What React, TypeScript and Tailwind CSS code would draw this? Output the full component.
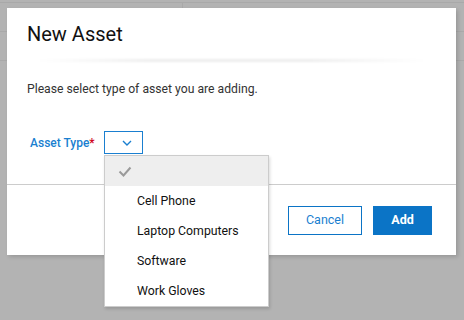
import React from 'react';

const assetTypes = ['Cell Phone', 'Laptop Computers', 'Software', 'Work Gloves'];

function Chevron() {
  return (
    <svg width="10" height="6" viewBox="0 0 10 6" fill="none">
      <path d="M1 1l4 4 4-4" stroke="#1a7fd0" strokeWidth="1.4" />
    </svg>
  );
}

function Check() {
  return (
    <svg width="14" height="11" viewBox="0 0 14 11" fill="none">
      <path d="M1.5 5.5l4 4 7-8" stroke="#9a9a9a" strokeWidth="2" />
    </svg>
  );
}

export default function App() {
  return (
    <div className="relative w-[464px] h-[320px] overflow-hidden bg-[#b3b3b3] font-['Roboto',sans-serif]">
      {/* background grid behind the overlay */}
      <div className="flex flex-col">
        <div className="h-[3px] border-b border-[#a9a9a9]" />
        <div className="h-[29px] border-b border-[#a9a9a9] flex">
          <div className="w-[183px] border-r border-[#a9a9a9]" />
        </div>
        <div className="h-[29px] border-b border-[#a9a9a9]" />
      </div>

      {/* modal */}
      <div className="absolute left-[7px] top-[8px] w-[449px] h-[247px] bg-white shadow-[2px_2px_4px_rgba(0,0,0,0.15)] flex flex-col">
        <div className="h-[51px] px-5 pt-[14px]">
          <h1 className="text-[20px] leading-[24px] text-[#111] font-normal">New Asset</h1>
        </div>
        <div className="h-[3px] mx-[30px] bg-[linear-gradient(90deg,rgba(0,0,0,0)_0%,rgba(0,0,0,0.07)_30%,rgba(0,0,0,0.07)_70%,rgba(0,0,0,0)_100%)] blur-[1px]" />
        <p className="mt-[19px] px-5 text-[12.2px] leading-[16px] text-[#333]">
          Please select type of asset you are adding.
        </p>
        <div className="mt-[34px] flex items-center pl-[23px] h-[23px]">
          <span className="text-[12px] font-medium text-[#1a7fd0] w-[74px]">
            Asset Type<span className="text-[#d0021b]">*</span>
          </span>
          <div className="w-[39px] h-[23px] border border-[#1a7fd0] flex items-center justify-center pl-[12px] pr-[6px]">
            <Chevron />
          </div>
        </div>
        <div className="mt-[30px] border-t border-[#cccccc]" />
        <div className="flex justify-end gap-[11px] pr-[24px] pt-[21px]">
          <button className="w-[74px] h-[29px] border border-[#0b74c6] text-[#1a7fd0] text-[12.5px]">
            Cancel
          </button>
          <button className="w-[59px] h-[29px] bg-[#0b74c6] text-white text-[12.5px] font-bold">
            Add
          </button>
        </div>
      </div>

      {/* open dropdown */}
      <div className="absolute left-[104px] top-[155px] w-[165px] bg-white border border-[#cccccc] shadow-[1px_2px_3px_rgba(0,0,0,0.15)] flex flex-col">
        <div className="h-[30px] bg-[#eeeeee] flex items-center pl-[13px]">
          <Check />
        </div>
        {assetTypes.map((t) => (
          <div key={t} className="h-[30px] flex items-center pl-[32px] text-[12.3px] text-[#111]">
            {t}
          </div>
        ))}
      </div>
    </div>
  );
}
